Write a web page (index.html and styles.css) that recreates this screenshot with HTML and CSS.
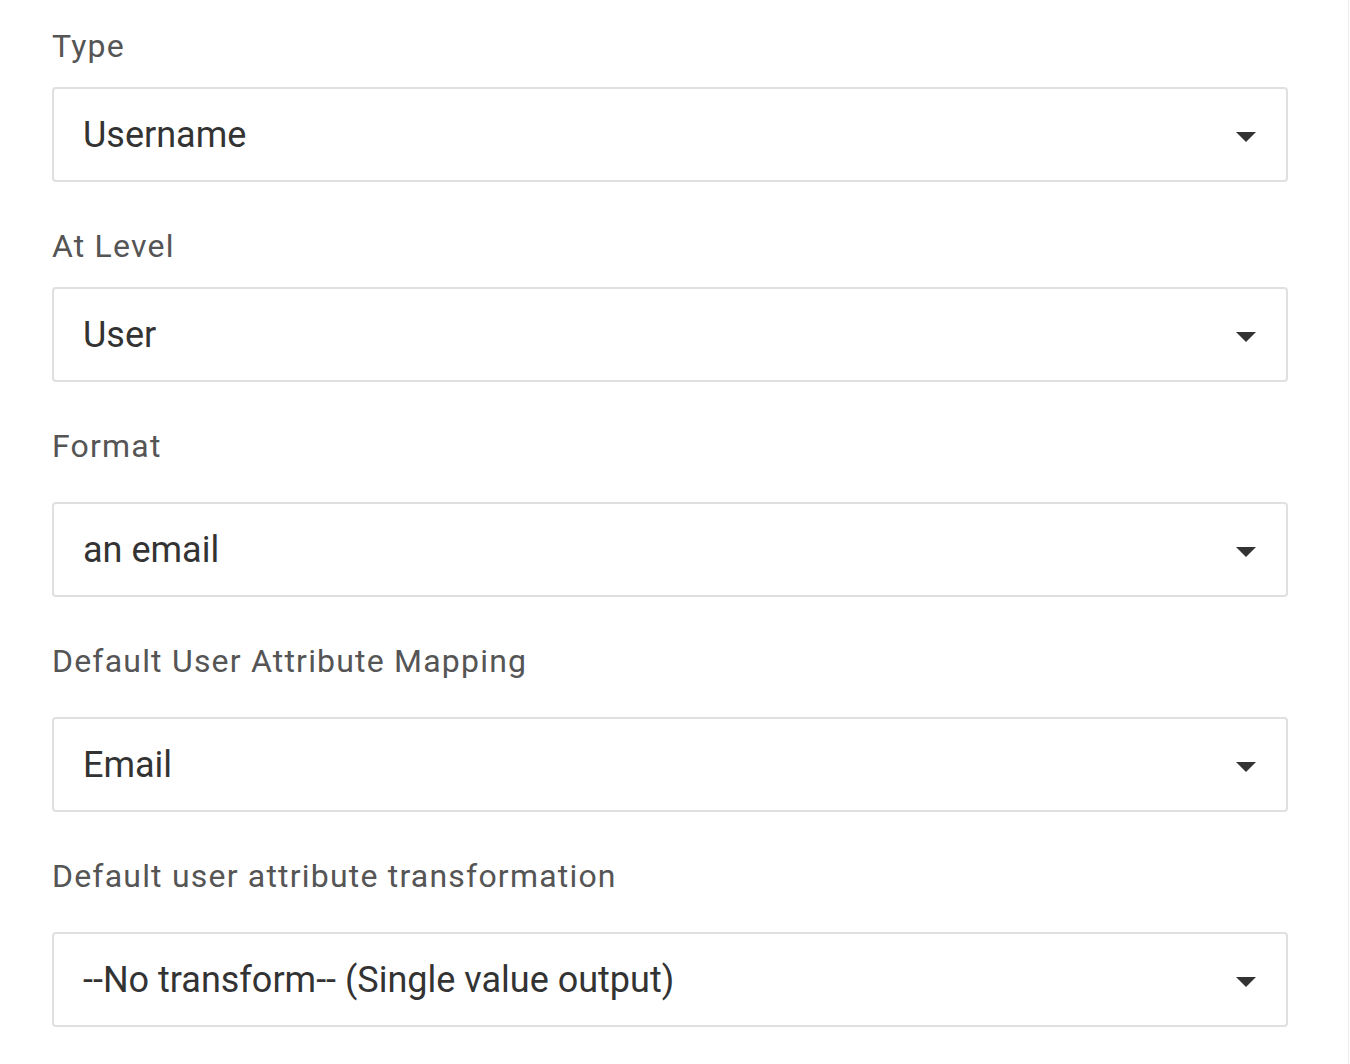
FILE: index.html
```html
<!DOCTYPE html>
<html>
<head>
<meta charset="utf-8">
<link rel="stylesheet" href="styles.css">
</head>
<body>
<div class="panel">
  <div class="form">
    <div class="field">
      <div class="label">Type</div>
      <div class="select"><span class="value">Username</span><span class="caret"></span></div>
    </div>
    <div class="field">
      <div class="label">At Level</div>
      <div class="select"><span class="value">User</span><span class="caret"></span></div>
    </div>
    <div class="field field--spaced">
      <div class="label">Format</div>
      <div class="select"><span class="value">an email</span><span class="caret"></span></div>
    </div>
    <div class="field field--spaced">
      <div class="label">Default User Attribute Mapping</div>
      <div class="select"><span class="value">Email</span><span class="caret"></span></div>
    </div>
    <div class="field field--spaced">
      <div class="label">Default user attribute transformation</div>
      <div class="select"><span class="value">--No transform-- (Single value output)</span><span class="caret"></span></div>
    </div>
  </div>
</div>
</body>
</html>
```

FILE: styles.css
```css
html, body {
  margin: 0;
  padding: 0;
  background: #fff;
}
body {
  font-family: Roboto, "Noto Sans", "Liberation Sans", sans-serif;
}
.panel {
  width: 1349px;
  height: 1064px;
  border-right: 1px solid #ececec;
  box-sizing: border-box;
  overflow: hidden;
}
.form {
  width: 1236px;
  margin-left: 52px;
  padding-top: 26px;
  display: flex;
  flex-direction: column;
  gap: 44px;
}
.field {
  display: flex;
  flex-direction: column;
  gap: 21px;
}
.field--spaced {
  gap: 36px;
}
.label {
  font-size: 32px;
  line-height: 40px;
  color: #555;
  letter-spacing: 1.2px;
}
.select {
  height: 95px;
  box-sizing: border-box;
  border: 2px solid #e0e0e0;
  border-radius: 4px;
  display: flex;
  align-items: center;
  justify-content: space-between;
  padding: 0 30px 0 29px;
}
.value {
  font-size: 36px;
  color: #333;
}
.caret {
  width: 0;
  height: 0;
  border-left: 10px solid transparent;
  border-right: 10px solid transparent;
  border-top: 10px solid #333;
  margin-top: 4px;
}
```
